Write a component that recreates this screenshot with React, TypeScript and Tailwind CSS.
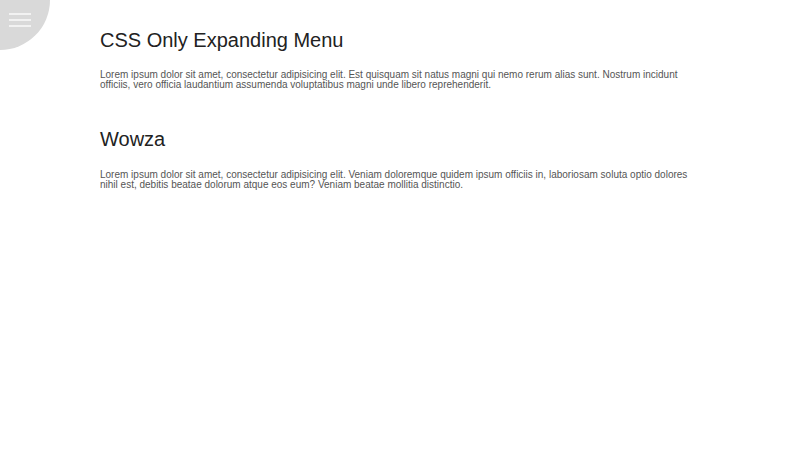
export default function App() {
  return (
    <div className="relative min-h-[450px] w-full bg-white" style={{ fontFamily: '"Liberation Sans", Arial, sans-serif' }}>
      <div className="absolute left-[-50px] top-[-50px] h-[100px] w-[100px] rounded-full bg-[#d9d9d9]">
        <div className="absolute left-[59px] top-[63px] flex w-[22px] flex-col gap-[4px]">
          <span className="block h-[2px] w-full bg-[#f2f2f2]" />
          <span className="block h-[2px] w-full bg-[#f2f2f2]" />
          <span className="block h-[2px] w-full bg-[#f2f2f2]" />
        </div>
      </div>
      <div className="mx-auto w-[600px] pt-[28px]">
        <h1 className="text-[20px] leading-[24px] text-[#222]">CSS Only Expanding Menu</h1>
        <p className="mt-[18px] text-[10px] leading-[10px] text-[#555]">
          Lorem ipsum dolor sit amet, consectetur adipisicing elit. Est quisquam sit natus magni qui nemo rerum alias sunt. Nostrum incidunt officiis, vero officia laudantium assumenda voluptatibus magni unde libero reprehenderit.
        </p>
        <h1 className="mt-[37px] text-[20px] leading-[24px] text-[#222]">Wowza</h1>
        <p className="mt-[19px] text-[10px] leading-[10px] text-[#555]">
          Lorem ipsum dolor sit amet, consectetur adipisicing elit. Veniam doloremque quidem ipsum officiis in, laboriosam soluta optio dolores nihil est, debitis beatae dolorum atque eos eum? Veniam beatae mollitia distinctio.
        </p>
      </div>
    </div>
  );
}
